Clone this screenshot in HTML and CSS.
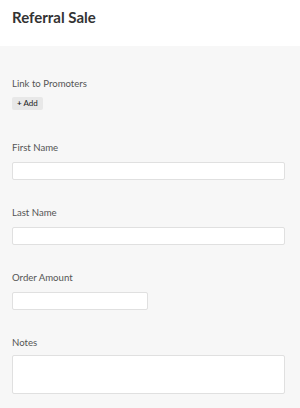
FILE: index.html
```html
<!DOCTYPE html>
<html lang="en">
<head>
    <meta charset="UTF-8">
    <meta name="viewport" content="width=device-width, initial-scale=1.0">
    <title>Referral Sale</title>
    <link rel="stylesheet" href="styles.css">
</head>
<body>
    <div class="header">
        <h1>Referral Sale</h1>
    </div>
    <div class="content">
        <div class="form-group promoters">
            <label>Link to Promoters</label>
            <button class="add-button"><b>+</b> Add</button>
        </div>
        <div class="form-group">
            <label for="first-name">First Name</label>
            <input type="text" id="first-name" name="first-name">
        </div>
        <div class="form-group">
            <label for="last-name">Last Name</label>
            <input type="text" id="last-name" name="last-name">
        </div>
        <div class="form-group">
            <label for="amount">Order Amount</label>
            <input type="text" id="amount" name="amount" class="short">
        </div>
        <div class="form-group notes">
            <label for="notes">Notes</label>
            <textarea id="notes" name="notes"></textarea>
        </div>
    </div>
</body>
</html>
```

FILE: styles.css
```css
body {
    font-family: 'Lato', sans-serif;
    background-color: #f7f7f7;
    color: #333;
    margin: 0;
}
.header {
    background-color: #fff;
    height: 46px;
    padding: 0 12px;
    box-sizing: border-box;
}
.header h1 {
    margin: 0;
    padding-top: 8px;
    font-size: 15px;
    font-weight: bold;
    color: #333;
    line-height: 18px;
}
.content {
    padding: 32px 15px 0 12px;
}
.form-group {
    margin-bottom: 27px;
}
.form-group.promoters {
    margin-bottom: 32px;
}
.form-group label {
    display: block;
    font-size: 9.6px;
    line-height: 12px;
    color: #555;
    margin-bottom: 8px;
}
.form-group.notes label {
    margin-bottom: 6px;
}
.form-group input, .form-group textarea {
    display: block;
    width: 100%;
    height: 18px;
    box-sizing: border-box;
    border: 1px solid #e0e0e0;
    border-radius: 2px;
    background-color: #fff;
    margin: 0;
}
.form-group input.short {
    width: 136px;
}
.form-group textarea {
    height: 39px;
    resize: none;
}
.add-button {
    display: block;
    font-family: 'Lato', sans-serif;
    font-size: 8px;
    color: #222;
    background-color: #e8e8e8;
    border: none;
    border-radius: 2px;
    padding: 0 5px;
    height: 13px;
    line-height: 13px;
    margin-top: -1px;
}
```
